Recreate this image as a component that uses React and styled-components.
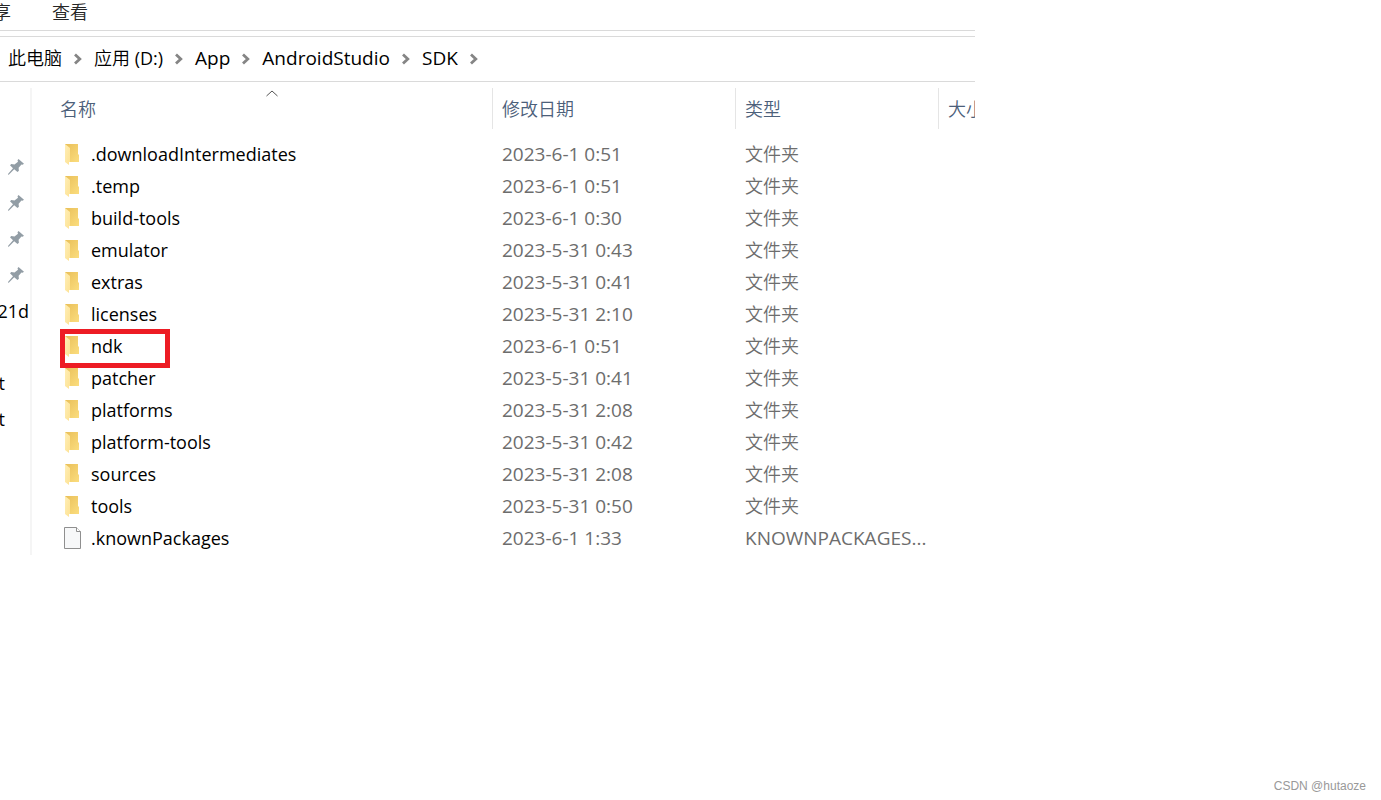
import React from "react";
import styled, { createGlobalStyle, ThemeProvider } from "styled-components";

const theme = {
  text: "#000000",
  tab: "#262626",
  muted: "#6d6d6d",
  heading: "#4c607a",
  line: "#dadada",
  columnLine: "#e5e5e5",
  pane: "#f5f5f5",
  pin: "#929da5",
  chevron: "#858585",
  marker: "#ed1c24",
};

const GlobalStyle = createGlobalStyle`
  * {
    box-sizing: border-box;
  }

  body {
    margin: 0;
    background: #ffffff;
    font-family: "Open Sans", "Noto Sans CJK SC", sans-serif;
    font-size: 18px;
    line-height: 24px;
  }

  button {
    border: 0;
    padding: 0;
    background: none;
    font: inherit;
    color: inherit;
    cursor: pointer;
  }

  a {
    color: inherit;
    text-decoration: none;
  }
`;

const Page = styled.div`
  display: flex;
  flex-direction: column;
  min-height: 100vh;
`;

const Explorer = styled.main`
  width: 100%;
  max-width: 975px;
  overflow: hidden;
  color: ${(props) => props.theme.text};
`;

const Ribbon = styled.nav`
  display: flex;
  align-items: flex-start;
  gap: 41px;
  height: 31px;
  margin-left: -7px;
  color: ${(props) => props.theme.tab};
  border-bottom: 1px solid ${(props) => props.theme.line};
`;

const Tab = styled.button`
  font-family: "Noto Sans CJK SC", sans-serif;
  font-weight: 350;
  line-height: 22px;
`;

const AddressBar = styled.nav`
  display: flex;
  align-items: center;
  height: 46px;
  margin-top: 5px;
  padding: 0 0 2px 8px;
  border-top: 1px solid ${(props) => props.theme.line};
  border-bottom: 1px solid ${(props) => props.theme.line};
`;

const Crumb = styled.a`
  font-size: ${(props) => (props.$latin ? 19 : 18)}px;
  font-weight: ${(props) => (props.$latin ? 400 : 350)};
  white-space: nowrap;
`;

const Drive = styled.span`
  font-weight: 400;
`;

const Body = styled.div`
  display: flex;
  padding-top: 6px;
`;

const Sidebar = styled.aside`
  flex: none;
  width: 32px;
  padding-top: 61px;
  overflow: hidden;
  border-right: 2px solid ${(props) => props.theme.pane};
`;

const SideItem = styled.div`
  display: flex;
  align-items: center;
  justify-content: flex-end;
  height: 36px;
  padding-right: ${(props) => props.$inset}px;
  white-space: nowrap;
`;

const FilePane = styled.section`
  flex: 1;
  min-width: 0;
  padding: 0 0 1px 19px;
`;

const FileTable = styled.table`
  width: 100%;
  table-layout: fixed;
  border-collapse: separate;
  border-spacing: 0;
`;

const Column = styled.col`
  width: ${(props) => props.$width}px;
`;

const HeadCell = styled.th`
  position: relative;
  height: 41px;
  padding: 1px 0 0 9px;
  overflow: hidden;
  color: ${(props) => props.theme.heading};
  font-weight: 350;
  text-align: left;
  white-space: nowrap;
  border-right: 1px solid ${(props) => props.theme.columnLine};

  &:last-child {
    border-right: 0;
  }
`;

const SortMark = styled.svg`
  position: absolute;
  top: 2px;
  left: 50%;
  margin-left: -6px;
`;

const Spacer = styled.tbody`
  td {
    height: 9px;
    padding: 0;
  }
`;

const Cell = styled.td`
  height: 32px;
  padding: 0 0 0 9px;
  overflow: hidden;
  color: ${(props) => props.theme.muted};
  font-size: ${(props) => (props.$latin ? 19 : 18)}px;
  font-weight: ${(props) => (props.$latin ? 400 : 350)};
  text-overflow: ellipsis;
  white-space: nowrap;
`;

const NameCell = styled.td`
  position: relative;
  height: 32px;
  padding: 0 0 0 13px;
`;

const FileName = styled.a`
  display: flex;
  align-items: center;
  gap: 9px;
`;

const Marker = styled.span`
  position: absolute;
  z-index: 1;
  top: -1px;
  left: 9px;
  width: 110px;
  height: 39px;
  border: 5px solid ${(props) => props.theme.marker};
  pointer-events: none;
`;

const Credit = styled.footer`
  margin-top: auto;
  padding: 0 15px 5px 0;
  color: #999999;
  font-family: "Liberation Sans", sans-serif;
  font-size: 12px;
  line-height: 18px;
  text-align: right;
`;

const ChevronSvg = styled.svg`
  flex: none;
  margin: 2px 11px 0;
`;

const Chevron = () => (
  <ChevronSvg width="10" height="12" viewBox="0 0 10 12">
    <path
      d="M2 1.5 6.8 6 2 10.5"
      fill="none"
      stroke={theme.chevron}
      strokeWidth="2.8"
    />
  </ChevronSvg>
);

const Pin = () => (
  <svg width="16" height="16" viewBox="0 0 16 16" fill={theme.pin}>
    <path d="M10.5 0 16 4.7 14.6 5.8 13.5 5.4 10.6 8.7 10.9 11.8 9.5 13 6.2 10.2 1 15.6 0 15.7 0 14.9 5 9.2 2 6.2 3.3 5 6.5 5.4 10 2.7 9.5 1.2Z" />
  </svg>
);

const FolderIcon = () => (
  <svg width="18" height="22" viewBox="0 0 18 22">
    <defs>
      <linearGradient id="folderBack" x1="0" y1="0" x2="1" y2="1">
        <stop offset="0" stopColor="#e9bf59" />
        <stop offset="1" stopColor="#fbdd7e" />
      </linearGradient>
      <linearGradient id="folderFlap" x1="0" y1="0" x2="1" y2="1">
        <stop offset="0" stopColor="#ffeeb5" />
        <stop offset="1" stopColor="#fde294" />
      </linearGradient>
    </defs>
    <path d="M1 1H14V11L15 12V19H1Z" fill="url(#folderBack)" />
    <path d="M1 1 6 5V19H5V22L1 19Z" fill="url(#folderFlap)" />
  </svg>
);

const FileIcon = () => (
  <svg width="18" height="22" viewBox="0 0 18 22">
    <path d="M.5.5H12.5L16.5 4.5V21.5H.5Z" fill="#f7f8f9" stroke="#8f8f8f" />
    <path d="M12.5.5V4.5H16.5" fill="#ffffff" stroke="#8f8f8f" />
  </svg>
);

const crumbs = [
  { label: "此电脑" },
  { label: "应用", drive: "(D:)" },
  { label: "App", latin: true },
  { label: "AndroidStudio", latin: true },
  { label: "SDK", latin: true },
];

const pinned = [1, 2, 3, 4];

const sideLabels = [
  { id: 1, label: "21d", inset: 1 },
  { id: 2, label: "", inset: 1 },
  { id: 3, label: "t", inset: 25 },
  { id: 4, label: "t", inset: 25 },
];

const files = [
  { name: ".downloadIntermediates", date: "2023-6-1 0:51" },
  { name: ".temp", date: "2023-6-1 0:51" },
  { name: "build-tools", date: "2023-6-1 0:30" },
  { name: "emulator", date: "2023-5-31 0:43" },
  { name: "extras", date: "2023-5-31 0:41" },
  { name: "licenses", date: "2023-5-31 2:10" },
  { name: "ndk", date: "2023-6-1 0:51", marked: true },
  { name: "patcher", date: "2023-5-31 0:41" },
  { name: "platforms", date: "2023-5-31 2:08" },
  { name: "platform-tools", date: "2023-5-31 0:42" },
  { name: "sources", date: "2023-5-31 2:08" },
  { name: "tools", date: "2023-5-31 0:50" },
  { name: ".knownPackages", date: "2023-6-1 1:33", type: "KNOWNPACKAGES..." },
];

const App = () => {
  return (
    <ThemeProvider theme={theme}>
      <GlobalStyle />
      <Page>
        <Explorer>
          <Ribbon>
            <Tab>享</Tab>
            <Tab>查看</Tab>
          </Ribbon>

          <AddressBar>
            {crumbs.map((crumb) => (
              <React.Fragment key={crumb.label}>
                <Crumb href="#" $latin={crumb.latin}>
                  {crumb.label}
                  {crumb.drive && <Drive> {crumb.drive}</Drive>}
                </Crumb>
                <Chevron />
              </React.Fragment>
            ))}
          </AddressBar>

          <Body>
            <Sidebar>
              {pinned.map((id) => (
                <SideItem key={id} $inset={6}>
                  <Pin />
                </SideItem>
              ))}
              {sideLabels.map((item) => (
                <SideItem key={item.id} $inset={item.inset}>
                  {item.label}
                </SideItem>
              ))}
            </Sidebar>

            <FilePane>
              <FileTable>
                <colgroup>
                  <Column $width={442} />
                  <Column $width={243} />
                  <Column $width={203} />
                  <col />
                </colgroup>
                <thead>
                  <tr>
                    <HeadCell>
                      <button>名称</button>
                      <SortMark width="12" height="7" viewBox="0 0 12 7">
                        <path d="M.5 6 6 1 11.5 6" fill="none" stroke="#555555" />
                      </SortMark>
                    </HeadCell>
                    <HeadCell>
                      <button>修改日期</button>
                    </HeadCell>
                    <HeadCell>
                      <button>类型</button>
                    </HeadCell>
                    <HeadCell>
                      <button>大小</button>
                    </HeadCell>
                  </tr>
                </thead>
                <Spacer>
                  <tr>
                    <td colSpan={4} />
                  </tr>
                </Spacer>
                <tbody>
                  {files.map((file) => (
                    <tr key={file.name}>
                      <NameCell>
                        <FileName href="#">
                          {file.type ? <FileIcon /> : <FolderIcon />}
                          {file.name}
                        </FileName>
                        {file.marked && <Marker />}
                      </NameCell>
                      <Cell $latin>{file.date}</Cell>
                      <Cell $latin={Boolean(file.type)}>
                        {file.type || "文件夹"}
                      </Cell>
                      <Cell />
                    </tr>
                  ))}
                </tbody>
              </FileTable>
            </FilePane>
          </Body>
        </Explorer>
        <Credit>CSDN @hutaoze</Credit>
      </Page>
    </ThemeProvider>
  );
};

export default App;
